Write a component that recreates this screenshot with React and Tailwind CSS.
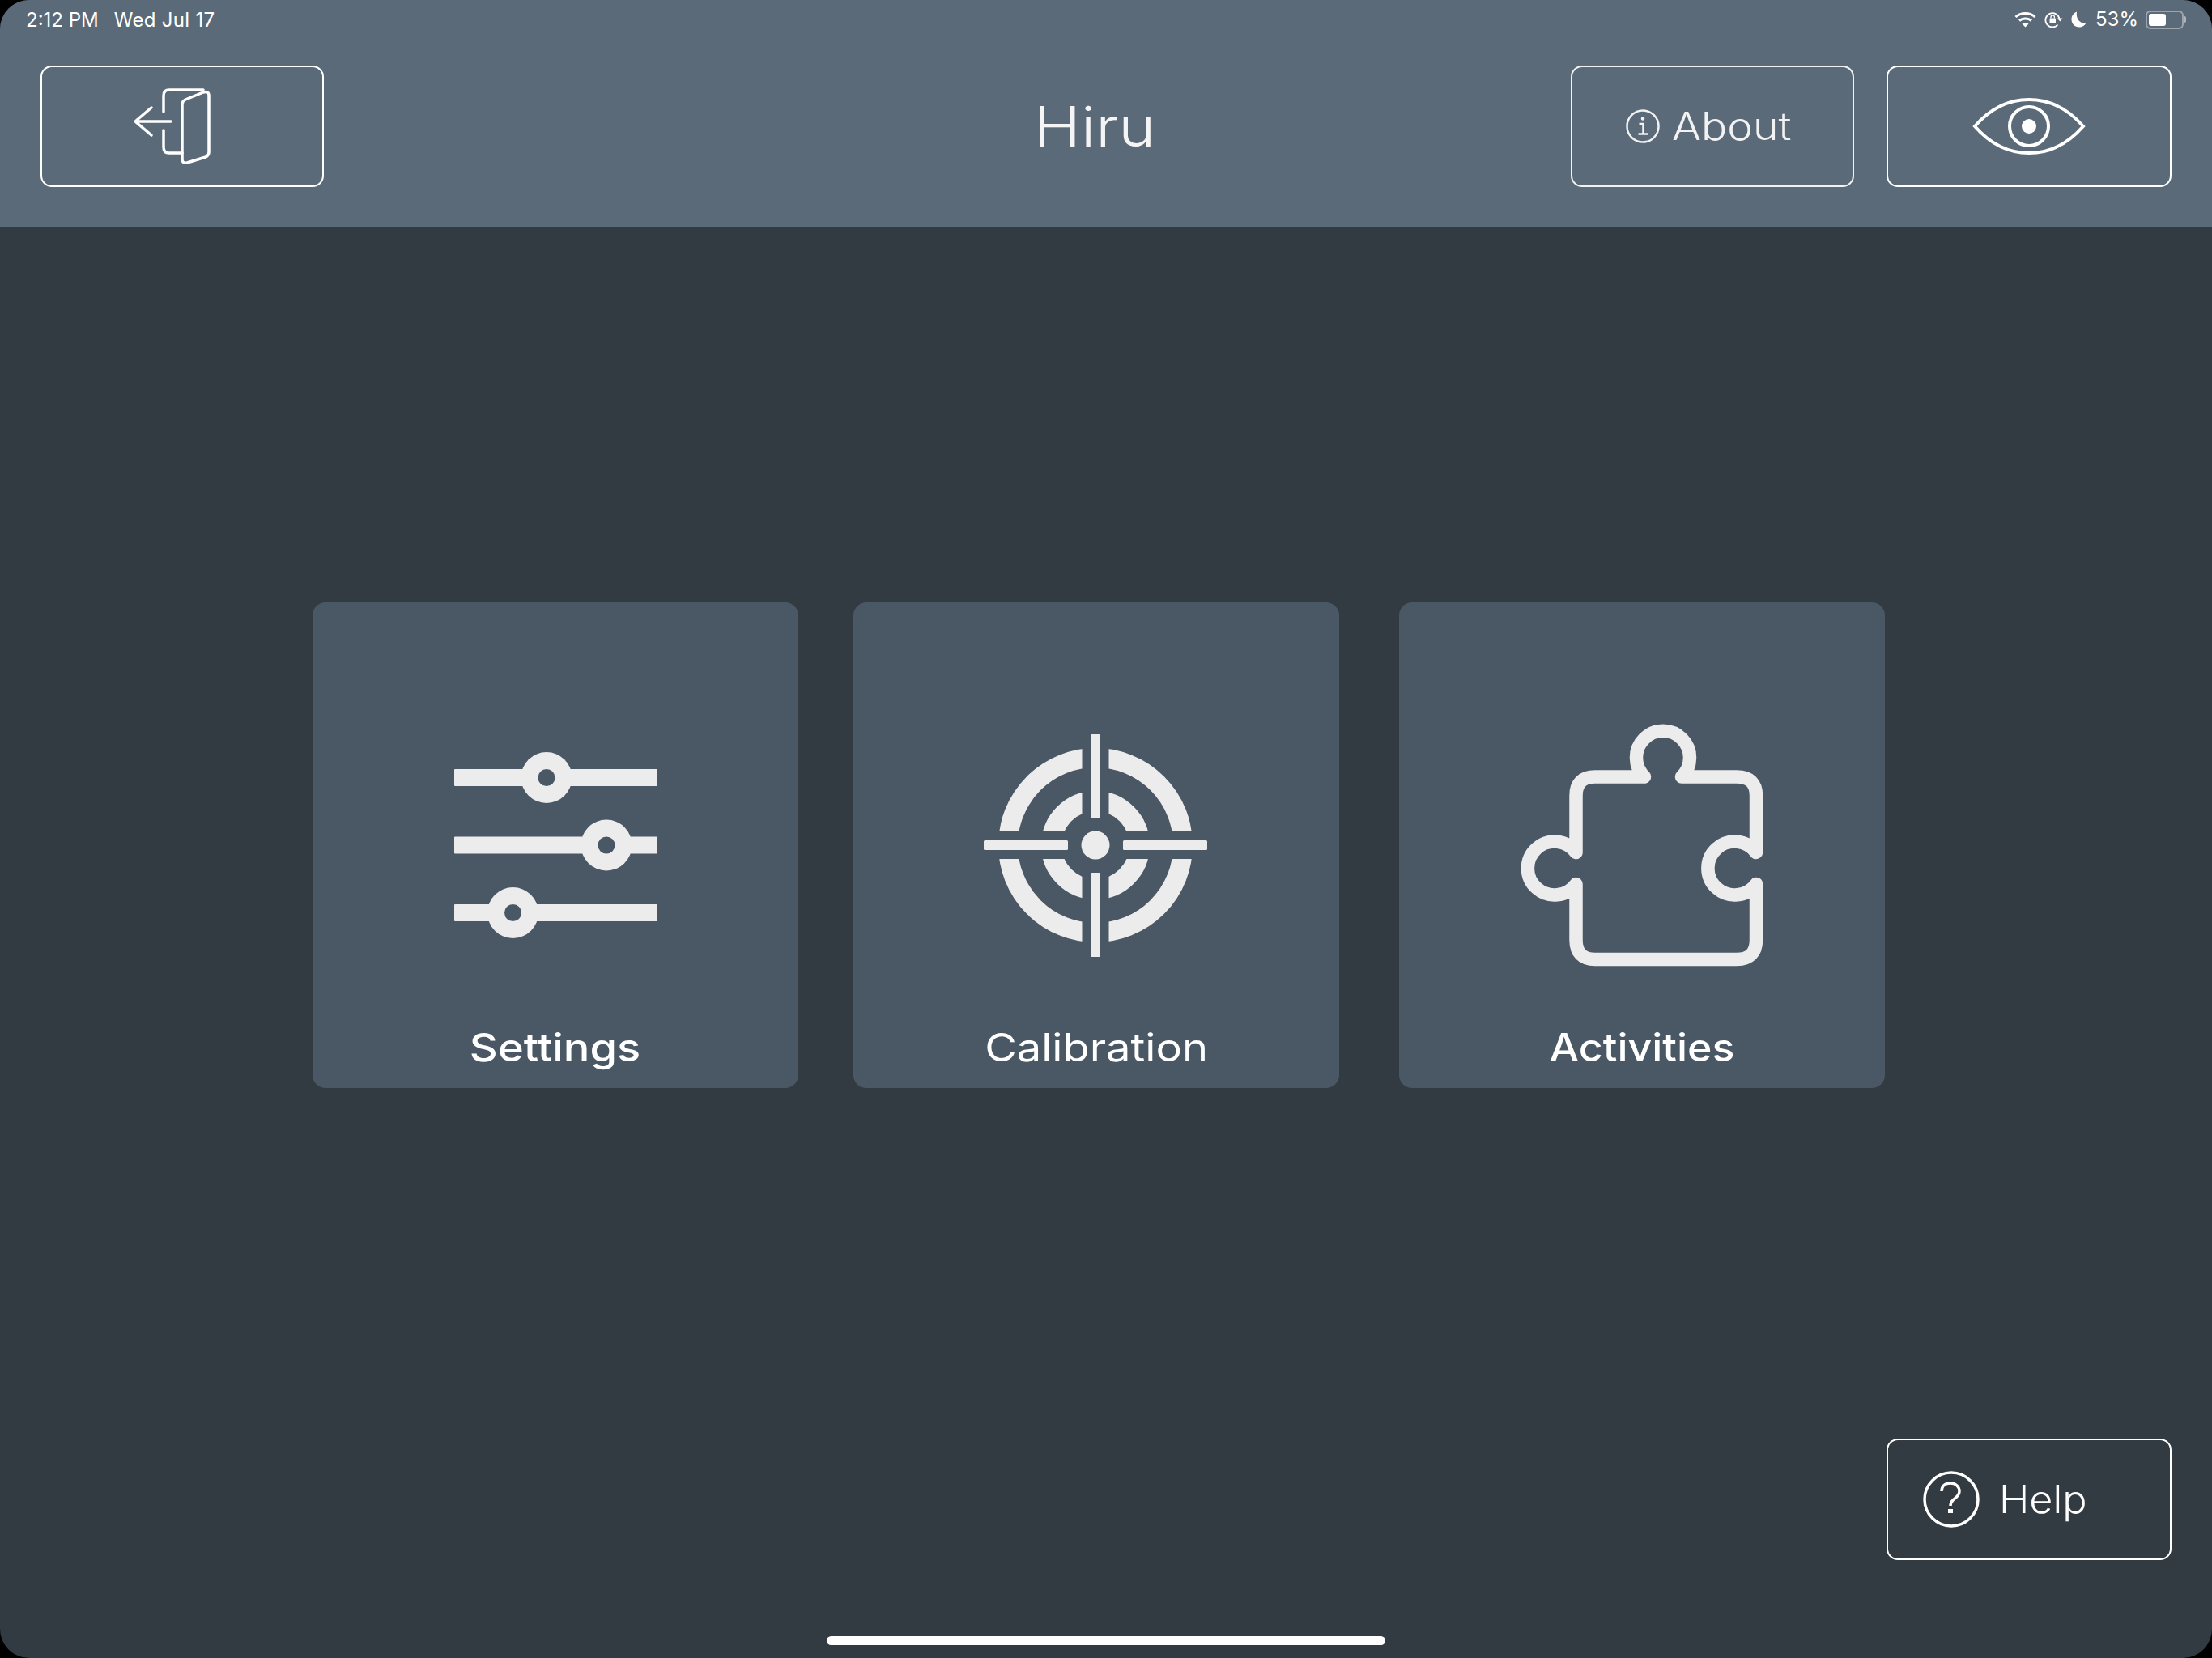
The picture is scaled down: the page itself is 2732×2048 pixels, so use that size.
const HEADER_FONT = "font-['Inter',sans-serif]"

function DoorIcon() {
  return (
    <svg width="102" height="100" viewBox="0 0 102 100" fill="none" stroke="#ffffff" strokeWidth="3.5" strokeLinecap="round" strokeLinejoin="round">
      <path d="M26 28 L6 45 L26 62 M6 45 H50" />
      <path d="M41 33 V13 Q41 6 48 6 H90" />
      <path d="M41 56 V77 Q41 84 48 84 H64" />
      <path d="M64 24 Q64 20 68 18 L90 9 Q97 7 97 13 V83 Q97 87 93 89 L70 96 Q64 97 64 92 Z" />
    </svg>
  )
}

function EyeIcon() {
  return (
    <svg width="140" height="70" viewBox="0 0 140 70" fill="none" stroke="#ffffff" strokeWidth="4">
      <path d="M3 35 C24 11 46 2 70 2 C94 2 116 11 137 35 C116 59 94 68 70 68 C46 68 24 59 3 35 Z" />
      <circle cx="70" cy="35" r="24" />
      <circle cx="70" cy="35" r="9" fill="#ffffff" stroke="none" />
    </svg>
  )
}

function InfoIcon() {
  return (
    <svg width="42" height="42" viewBox="0 0 42 42" fill="none" stroke="#f2f2f2" strokeWidth="2.5">
      <circle cx="21" cy="21" r="19.5" />
      <circle cx="21" cy="11.5" r="2.2" fill="#f2f2f2" stroke="none" />
      <path d="M16.5 18 H21.5 V30 M15.5 30.5 H27" />
    </svg>
  )
}

function HelpIcon() {
  return (
    <svg width="70" height="70" viewBox="0 0 70 70" fill="none" stroke="#ffffff" strokeWidth="3.5">
      <circle cx="35" cy="35" r="33" />
      <path d="M23 25 C23 18 28 15 34 15 C40 15 45 19 45 25 C45 31 40 33 37 36 C35 38 34 39 34 43" />
      <rect x="31" y="47" width="6" height="5" fill="#ffffff" stroke="none" />
    </svg>
  )
}

function SlidersIcon() {
  return (
    <svg width="300" height="300" viewBox="0 0 300 300" fill="#ececec">
      {[[66.5, 139], [150, 213], [233.5, 97.5]].map(([y, x]) => (
        <g key={y}>
          <rect x="25" y={y - 10.5} width="251" height="21" rx="1" />
          <circle cx={x} cy={y} r="31.5" />
          <circle cx={x} cy={y} r="10.5" fill="#4a5764" />
        </g>
      ))}
    </svg>
  )
}

function TargetIcon() {
  return (
    <svg width="300" height="300" viewBox="1 0 300 300" fill="#ececec">
      <circle cx="150" cy="150" r="108" fill="none" stroke="#ececec" strokeWidth="24" />
      <circle cx="150" cy="150" r="54.5" fill="none" stroke="#ececec" strokeWidth="25" />
      <rect x="133.5" y="0" width="33" height="300" fill="#4a5764" />
      <rect x="0" y="133" width="302" height="34" fill="#4a5764" />
      <rect x="144" y="13" width="12" height="103" rx="1.5" />
      <rect x="144" y="184" width="12" height="104" rx="1.5" />
      <rect x="12" y="144" width="104" height="12" rx="1.5" />
      <rect x="184" y="144" width="104" height="12" rx="1.5" />
      <circle cx="150" cy="150" r="17.5" />
    </svg>
  )
}

function PuzzleIcon() {
  return (
    <svg width="300" height="300" viewBox="0 0 300 300" fill="none" stroke="#ececec" strokeWidth="16.5" strokeLinecap="round" strokeLinejoin="round">
      <path d="M153 65.5 A33 33 0 1 1 199 65.5 H267 Q291 65.5 291 89 V159 A33 33 0 1 0 291 198 V267 Q291 291 267 291 H92 Q68.5 291 68.5 267 V198 A33 33 0 1 1 68.5 159 V89 Q68.5 65.5 92 65.5 H153" />
    </svg>
  )
}

function WifiIcon() {
  return (
    <svg width="27" height="20" viewBox="0 0 27 20" fill="none" stroke="#ffffff" strokeWidth="3">
      <path d="M1.5 7 C8 1 19 1 25.5 7" />
      <path d="M6 11.5 C10 8 17 8 21 11.5" />
      <path d="M13.5 19.5 L9.5 15.5 C11.5 13.8 15.5 13.8 17.5 15.5 Z" fill="#ffffff" stroke="none" />
    </svg>
  )
}

function RotationLockIcon() {
  return (
    <svg width="23" height="20" viewBox="0 0 23 20" fill="none" stroke="#ffffff" strokeWidth="1.8">
      <path d="M18.5 9.5 A 8.6 8.6 0 1 0 16.5 16.5" />
      <path d="M16 8.5 L22.5 8.5 L19.2 12.5 Z" fill="#ffffff" stroke="none" />
      <rect x="6.5" y="8.5" width="7.5" height="6" rx="1" fill="#ffffff" stroke="none" />
      <path d="M8 8.5 V7 A2.2 2.2 0 0 1 12.4 7 V8.5" strokeWidth="1.3" />
    </svg>
  )
}

function MoonIcon() {
  return (
    <svg width="19" height="20" viewBox="0 0 19 20" fill="#ffffff">
      <path d="M7 0.5 C3 2 0.5 5.5 0.5 10 C0.5 15.5 4.7 19.5 10 19.5 C13.5 19.5 16.5 17.7 18.5 14.5 C12 15.5 5.5 10.5 7 0.5 Z" />
    </svg>
  )
}

function Tile({ label, className, children }) {
  return (
    <div className="flex h-[600px] w-[600px] flex-col items-center rounded-[16px] bg-[#4a5764] pt-[150px]">
      <div className="flex h-[300px] w-[300px] items-center justify-center">{children}</div>
      <div className={`mt-[70px] text-[48px] leading-[60px] text-white ${className}`}>{label}</div>
    </div>
  )
}

export default function App() {
  return (
    <div className={`h-[2048px] w-[2732px] bg-black ${HEADER_FONT}`}>
      <div className="flex h-full flex-col overflow-hidden rounded-[36px] bg-[#323a42]">
        <header className="h-[280px] bg-[#5b6a79] pl-[50px] pr-[50px]">
          <div className="flex h-[48px] items-center justify-between text-white">
            <div className="-ml-[18px] flex pt-[1px] text-[24px] leading-none">
              <span>2:12 PM</span>
              <span className="ml-[19px] tracking-[0.3px]">Wed Jul 17</span>
            </div>
            <div className="-mr-[18px] flex items-center">
              <WifiIcon />
              <div className="ml-[10px]"><RotationLockIcon /></div>
              <div className="ml-[10px]"><MoonIcon /></div>
              <span className="ml-[11px] text-[24px] leading-none">53%</span>
              <div className="ml-[9px] flex h-[23px] w-[47px] items-center rounded-[6px] border-2 border-white/40 pl-[2px]">
                <div className="h-[15px] w-[21px] rounded-[3px] bg-white" />
              </div>
              <div className="ml-[1px] h-[8px] w-[2px] rounded-r-full bg-white/50" />
            </div>
          </div>
          <div className="mt-[33px] flex items-center">
            <button className="flex h-[150px] w-[350px] items-center justify-center rounded-[14px] border-2 border-white">
              <div className="-ml-[26px] mt-[-3px]"><DoorIcon /></div>
            </button>
            <div className="ml-[877px] origin-left scale-x-[1.15] text-[68px] font-light leading-none text-[#f5f5f5]">Hiru</div>
            <div className="ml-auto flex gap-[40px]">
              <button className="flex h-[150px] w-[350px] items-center rounded-[14px] border-2 border-[#f2f2f2] pl-[66px]">
                <InfoIcon />
                <span className="ml-[15px] origin-left scale-x-[1.115] text-[48px] font-light leading-none text-[#f2f2f2]">About</span>
              </button>
              <button className="flex h-[150px] w-[352px] items-center justify-center rounded-[14px] border-2 border-white">
                <EyeIcon />
              </button>
            </div>
          </div>
        </header>

        <main className="flex flex-1 flex-col">
          <div className="ml-[386px] mt-[464px] flex">
            <Tile label="Settings" className="scale-x-[1.13] font-[450]"><SlidersIcon /></Tile>
            <div className="ml-[68px]">
              <Tile label="Calibration" className="scale-x-[1.13] font-normal"><TargetIcon /></Tile>
            </div>
            <div className="ml-[74px]">
              <Tile label="Activities" className="scale-x-[1.08] font-medium"><PuzzleIcon /></Tile>
            </div>
          </div>

          <div className="mr-[50px] mt-[433px] flex justify-end">
            <button className="flex h-[150px] w-[352px] items-center rounded-[14px] border-2 border-white pl-[43px]">
              <HelpIcon />
              <span className="ml-[24px] origin-left scale-x-[1.05] text-[48px] font-light leading-none text-white">Help</span>
            </button>
          </div>

          <div className="mx-auto mt-[94px] h-[11px] w-[690px] rounded-full bg-white" />
        </main>
      </div>
    </div>
  )
}
